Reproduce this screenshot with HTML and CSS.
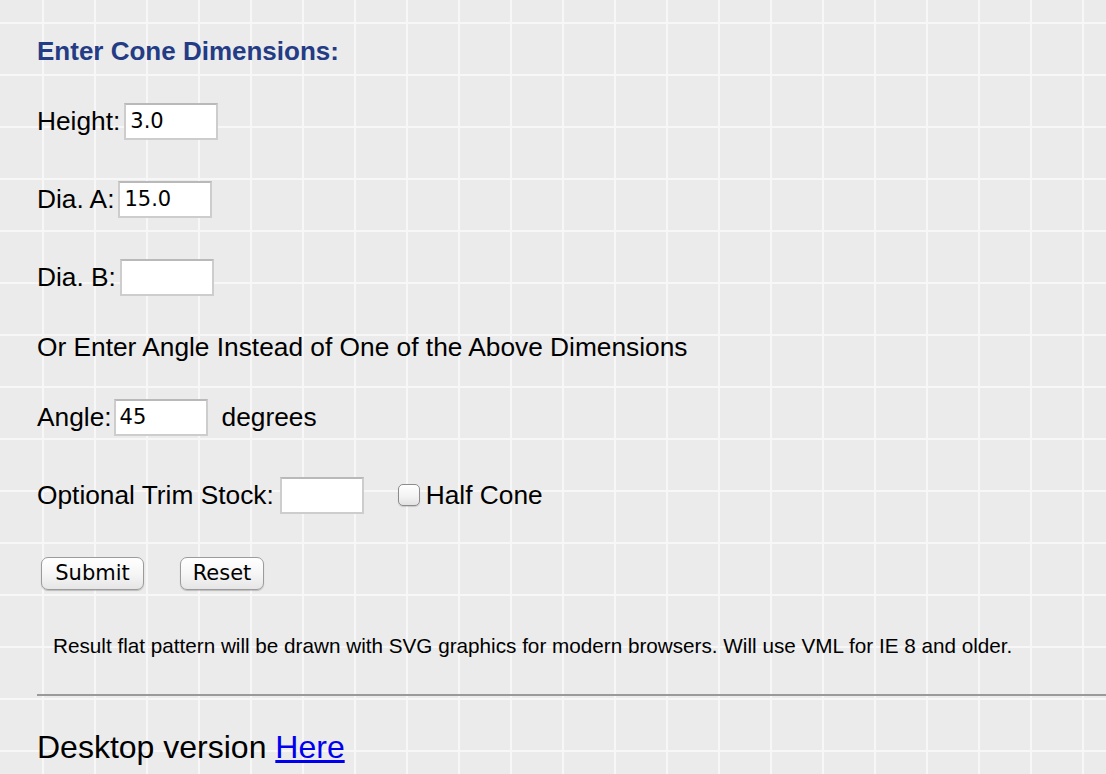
FILE: index.html
```html
<!DOCTYPE html>
<html lang="en">
<head>
  <meta charset="UTF-8">
  <meta name="viewport" content="width=device-width, initial-scale=1.0">
  <title>Cone Layout</title>
  <link rel="stylesheet" href="styles.css">
</head>
<body>

<div class="page">
  <form class="cone-form" onsubmit="return false;">
    <h2 class="title">Enter Cone Dimensions:</h2>

    <div class="field">
      <label for="height">Height:</label>
      <input class="num" type="text" id="height" value="3.0">
    </div>

    <div class="field">
      <label for="diaA">Dia. A:</label>
      <input class="num" type="text" id="diaA" value="15.0">
    </div>

    <div class="field">
      <label for="diaB">Dia. B:</label>
      <input class="num" type="text" id="diaB" value="">
    </div>

    <div class="field text-row">Or Enter Angle Instead of One of the Above Dimensions</div>

    <div class="field">
      <label for="angle">Angle:</label>
      <input class="num angle" type="text" id="angle" value="45">
      <span class="unit">degrees</span>
    </div>

    <div class="field">
      <label for="trim">Optional Trim Stock:</label>
      <input class="num trim" type="text" id="trim" value="">
      <input class="half" type="checkbox" id="half">
      <label for="half">Half Cone</label>
    </div>

    <div class="field buttons">
      <button type="submit" class="btn">Submit</button>
      <button type="reset" class="btn">Reset</button>
    </div>
  </form>

  <p class="note">Result flat pattern will be drawn with SVG graphics for modern browsers. Will use VML for IE 8 and older.</p>

  <hr class="divider">

  <p class="desktop">Desktop version <a href="#">Here</a></p>
</div>

</body>
</html>
```

FILE: styles.css
```css
html {
  background-color: #ebebeb;
  /* papel cuadriculado de fondo */
  background-image:
    linear-gradient(to right, #f7f7f7 2px, transparent 2px),
    linear-gradient(to bottom, #f7f7f7 2px, transparent 2px);
  background-size: 52px 52px;
  background-position: 42px 22px;
}

body {
  margin: 0;
  padding: 0;
  font-family: "Liberation Sans", Arial, Helvetica, sans-serif;
  color: #000;
  overflow: hidden;
}

.page {
  padding: 39px 0 0 37px;
}

.title {
  margin: 0 0 38px;
  font-size: 26px;
  line-height: 24px;
  font-weight: bold;
  color: #243b85;
}

.field {
  display: flex;
  align-items: center;
  height: 40px;
  margin-bottom: 38px;
  font-size: 26.3px;
}

.text-row {
  height: 24px;
}

.num {
  box-sizing: border-box;
  width: 94px;
  height: 37px;
  margin: 0 0 0 4px;
  padding: 0 4px;
  border: 2px solid #cdcdcd;
  border-top-color: #b9b9b9;
  background: #fff;
  font-family: "DejaVu Sans", Verdana, sans-serif;
  font-size: 21px;
  color: #000;
  outline: none;
}

.angle {
  width: 94px;
  margin-left: 2px;
}

.trim {
  width: 84px;
  margin-left: 6px;
}

.unit {
  margin-left: 14px;
}

.half {
  appearance: none;
  -webkit-appearance: none;
  box-sizing: border-box;
  width: 22px;
  height: 22px;
  margin: 0 6px 0 34px;
  border: 1px solid #8c8c8c;
  border-radius: 5px;
  background: linear-gradient(#ffffff, #f2f2f2 60%, #e2e2e2);
  box-shadow: 0 1px 1px rgba(0, 0, 0, 0.15);
}

.buttons {
  margin-bottom: 41px;
}

.btn {
  box-sizing: border-box;
  height: 33px;
  padding: 0;
  border: 1px solid #9b9b9b;
  border-radius: 7px;
  background: linear-gradient(#ffffff, #f6f6f6 50%, #e6e6e6);
  box-shadow: 0 1px 1px rgba(0, 0, 0, 0.2);
  font-family: "DejaVu Sans", Verdana, sans-serif;
  font-size: 21px;
  color: #000;
}

.btn:first-child {
  width: 103px;
  margin-left: 4px;
}

.btn + .btn {
  width: 84px;
  margin-left: 36px;
}

.note {
  margin: 0;
  padding-left: 16px;
  font-size: 20.7px;
  line-height: 24px;
}

.divider {
  margin: 36px 0 0;
  border: 0;
  border-top: 2px solid #9a9a9a;
  height: 0;
}

.desktop {
  margin: 33px 0 0;
  font-size: 32px;
  line-height: 36px;
}

.desktop a {
  color: #0000ee;
}
```
